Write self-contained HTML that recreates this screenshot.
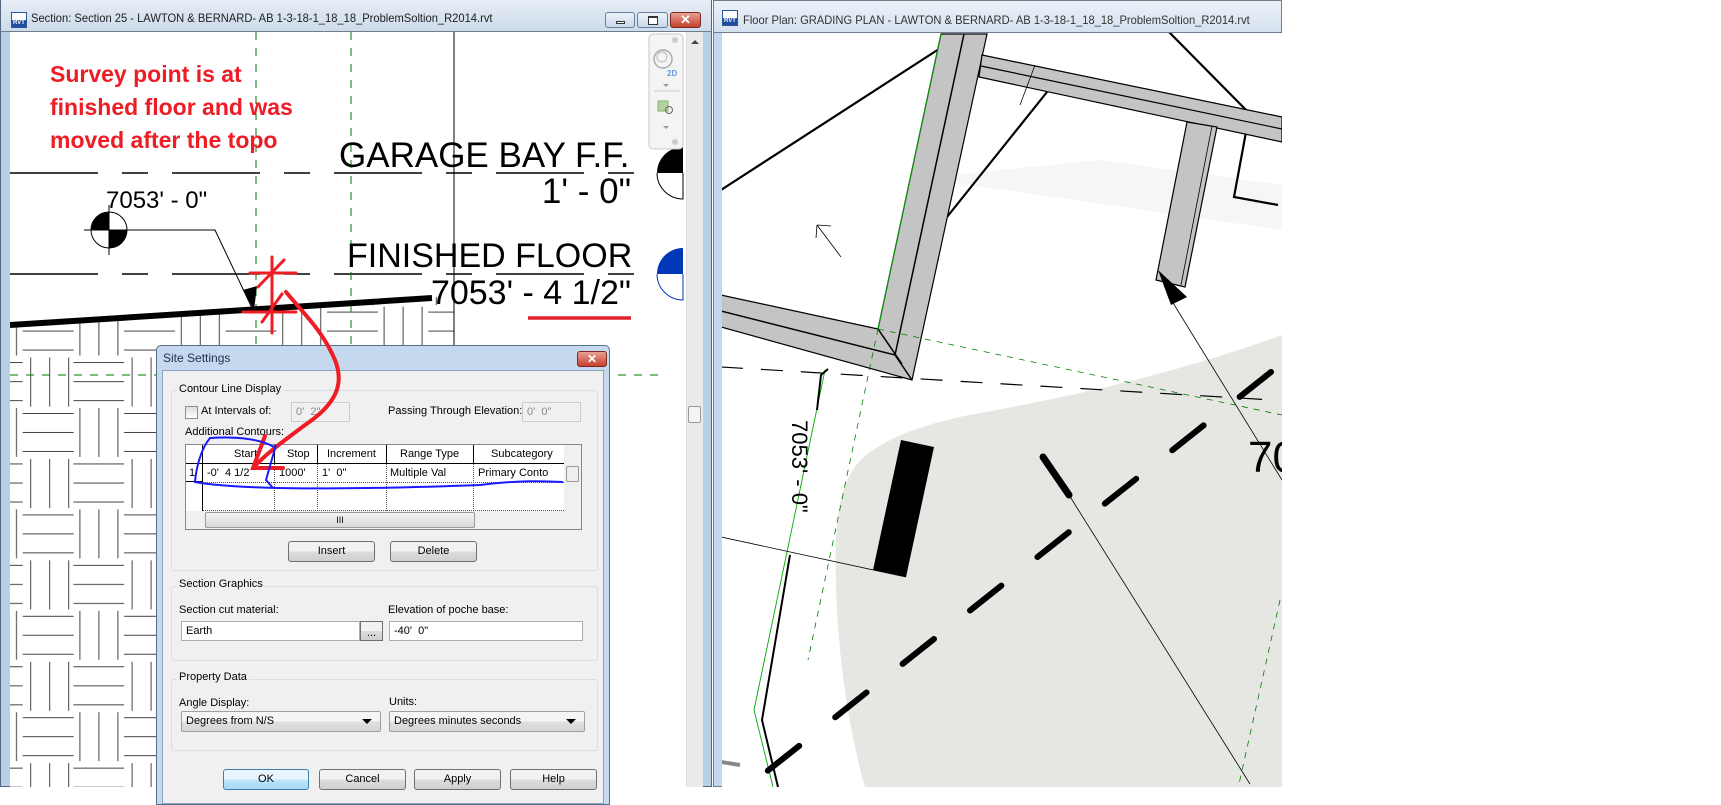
<!DOCTYPE html>
<html><head><meta charset="utf-8">
<style>
*{margin:0;padding:0;box-sizing:border-box}
body{width:1721px;height:787px;overflow:hidden;background:#fff;position:relative;font-family:"Liberation Sans",sans-serif}
.abs{position:absolute}
.tb{position:absolute;top:0;height:32px;background:linear-gradient(#e6edf6,#cddbeb);border-bottom:1px solid #6f7d8c}
.ttl{position:absolute;top:11px;font-size:12px;color:#1e1e1e;white-space:nowrap;transform-origin:0 0;transform:scaleX(0.93)}
.ico{position:absolute;top:12px;width:16px;height:16px;background:#fff;border:1px solid #2a56a0}
.ico:after{content:"RVT";position:absolute;left:0;bottom:0;width:14px;height:7px;background:#1f4f9c;color:#fff;font-size:6px;line-height:7px;text-align:center;font-weight:bold}
.wb{position:absolute;top:12px;height:16px;border:1px solid #6a7f99;border-radius:3px;background:linear-gradient(#eef3f9,#c9d7e8)}
.dlg{position:absolute;left:156px;top:345px;width:454px;height:460px;background:#c6d8ee;border:1px solid #566f8f;border-radius:5px 5px 0 0;font-size:11px;color:#000}
.dbody{position:absolute;left:5px;top:24px;right:5px;bottom:0;background:#f0f0f0;border:1px solid #8ea4be}
.grp{position:absolute;border:1px solid #d5dfe5;border-radius:3px}
.gl{position:absolute;background:#f0f0f0;padding:0 2px;font-size:11px;white-space:nowrap}
.lb{position:absolute;font-size:11px;white-space:nowrap}
.tx{position:absolute;height:20px;background:#fff;border:1px solid #abadb3;font-size:11px;padding:3px 4px;white-space:nowrap}
.btn{position:absolute;height:21px;border:1px solid #707070;border-radius:3px;background:linear-gradient(#f2f2f2 50%,#dddddd 50%,#cfcfcf);font-size:11px;text-align:center;line-height:19px}
.cb{position:absolute;height:21px;border:1px solid #a0a0a0;border-radius:2px;background:linear-gradient(#f5f5f5 50%,#e0e0e0 50%,#d5d5d5);font-size:11px;padding:3px 4px;white-space:nowrap}
.cb:after{content:"";position:absolute;right:8px;top:7px;border-left:5px solid transparent;border-right:5px solid transparent;border-top:5px solid #000}
</style></head><body>

<!-- LEFT WINDOW -->
<div class="abs" style="left:0;top:0;width:712px;height:787px;background:#b9cfe6;border:1px solid #52667e"></div>
<div class="tb" style="left:1px;width:710px"></div>
<div class="ico" style="left:11px"></div>
<div class="ttl" style="left:31px">Section: Section 25 - LAWTON &amp; BERNARD- AB 1-3-18-1_18_18_ProblemSoltion_R2014.rvt</div>
<div class="wb" style="left:605px;width:30px"><div class="abs" style="left:10px;top:8px;width:9px;height:3px;border:1px solid #333;background:#fff"></div></div>
<div class="wb" style="left:637px;width:31px"><div class="abs" style="left:10px;top:3px;width:10px;height:9px;border:1px solid #333;border-top-width:2px;background:#fff"></div></div>
<div class="wb" style="left:670px;width:31px;background:linear-gradient(#e8a093,#c4412c);border-color:#7a2a20"><div class="abs" style="left:0;top:-1px;width:29px;text-align:center;color:#fff;font-weight:bold;font-size:13px">✕</div></div>
<div class="abs" style="left:10px;top:32px;width:693px;height:755px;background:#fff"></div>
<div class="abs" style="left:686px;top:32px;width:17px;height:755px;background:#eaeaea;border-left:1px solid #ddd"></div>
<div class="abs" style="left:691px;top:40px;border-left:4px solid transparent;border-right:4px solid transparent;border-bottom:4px solid #444"></div>
<div class="abs" style="left:688px;top:406px;width:13px;height:17px;background:#f4f4f4;border:1px solid #999;border-radius:2px"></div>

<!-- RIGHT WINDOW -->
<div class="abs" style="left:713px;top:0;width:569px;height:787px;background:#c3d6ec;border:1px solid #6d7f93;overflow:hidden">
<div class="tb" style="left:0;width:569px;background:linear-gradient(#edf2f8,#d4e1ef)"></div>
<div class="ico" style="left:8px;top:9px"></div>
<div class="ttl" style="left:29px;top:12px;color:#333">Floor Plan: GRADING PLAN - LAWTON &amp; BERNARD- AB 1-3-18-1_18_18_ProblemSoltion_R2014.rvt</div>
</div>
<div class="abs" style="left:722px;top:33px;width:560px;height:754px;background:#fff"></div>

<svg class="abs" style="left:0;top:0" width="1721" height="787" viewBox="0 0 1721 787">
<defs>
<pattern id="hp" patternUnits="userSpaceOnUse" x="22.7" y="408" width="101.4" height="101.4">
<g stroke="#444" stroke-width="1" fill="none">
<path d="M0 5.5H51M0 24.5H51M0 43.5H51"/>
<path d="M57.2 0V49M76.2 0V49M95.2 0V49"/>
<path d="M8 51V100M27 51V100M46 51V100"/>
<path d="M50.7 56H101.4M50.7 75H101.4M50.7 94H101.4"/>
</g></pattern>
<clipPath id="lc"><rect x="10" y="32" width="676" height="755"/></clipPath>
<clipPath id="rc"><rect x="722" y="33" width="560" height="754"/></clipPath>
</defs>
<g clip-path="url(#lc)">
<polygon points="10,325 454,296 454,787 10,787" fill="url(#hp)"/>
<g stroke="#000" stroke-width="1.5" stroke-dasharray="88,24,26,24" fill="none">
<path d="M10 173H650"/><path d="M10 274H650"/>
</g>
<path d="M454 32V345" stroke="#000" stroke-width="1"/>
<g stroke="#007a00" stroke-width="1" stroke-dasharray="8,8"><path d="M256 32V787"/><path d="M351 32V787"/><path d="M10 375H660"/></g>
<path d="M10 325L432 298" stroke="#000" stroke-width="6"/>
<circle cx="109" cy="230" r="18" fill="#fff" stroke="#000"/>
<path d="M109 230V212A18 18 0 0 0 91 230Z M109 230V248A18 18 0 0 0 127 230Z" fill="#000"/>
<path d="M84 230H215L252 308M109 205V255" stroke="#000" stroke-width="1" fill="none"/>
<path d="M254 310L243 290L257 286Z" fill="#000"/>
<text x="106" y="208" font-size="24">7053' - 0"</text>
<text x="339" y="167" font-size="35">GARAGE BAY F.F.</text>
<text x="631" y="203" font-size="35" text-anchor="end">1' - 0"</text>
<text x="347" y="267" font-size="34">FINISHED FLOOR</text>
<text x="631" y="304" font-size="34" text-anchor="end">7053' - 4 1/2"</text>
<path d="M528 318H631" stroke="#e3202a" stroke-width="3.5"/>
<path d="M683 173V147A26 26 0 0 0 657 173Z" fill="#000"/>
<path d="M683 173V199A26 26 0 0 1 657 173" fill="#fff" stroke="#000"/>
<path d="M683 274V248A26 26 0 0 0 657 274Z" fill="#0038b8"/>
<path d="M683 274V300A26 26 0 0 1 657 274" fill="#fff" stroke="#0038b8"/>
<text x="50" y="82" font-size="23" font-weight="bold" fill="#ee1c25">Survey point is at</text>
<text x="50" y="115" font-size="23" font-weight="bold" fill="#ee1c25">finished floor and was</text>
<text x="50" y="148" font-size="23" font-weight="bold" fill="#ee1c25">moved after the topo</text>
<rect x="649" y="34" width="34" height="115" rx="4" fill="#f4f4f4" stroke="#c8c8c8"/>
<circle cx="675" cy="40" r="3" fill="#ccc"/><circle cx="675" cy="142" r="3" fill="#ccc"/>
<circle cx="663" cy="59" r="9" fill="none" stroke="#aaa" stroke-width="1.5"/><circle cx="662" cy="57" r="5" fill="none" stroke="#bbb"/>
<text x="667" y="76" font-size="8" fill="#6b9bd2" font-weight="bold">2D</text>
<path d="M663 84l3 3 3-3z" fill="#999"/><path d="M654 91H680" stroke="#ccc"/>
<rect x="658" y="101" width="10" height="10" fill="#b3d39c" stroke="#8ab070"/><circle cx="669" cy="110" r="3.5" fill="none" stroke="#666"/>
<path d="M663 126l3 3 3-3z" fill="#999"/>
</g>

<g clip-path="url(#rc)">
<path d="M1282 335C1200 365 1100 392 969 415C920 425 890 438 870 452C845 470 838 500 836 540C834 600 840 700 865 787L1282 787Z" fill="#e6e6e3"/>
<path d="M1282 185L1100 160L920 178L1282 230Z" fill="#f6f6f6"/>
<g stroke="#000" stroke-width="2.2" fill="none">
<path d="M721 190L939 49"/><path d="M947 217L1047 92"/><path d="M1169 32L1250 114"/>
<path d="M1246 132L1234 197L1278 205"/>
</g>
<polygon points="941,34 987,34 912,380 721,327 721,295 878,329" fill="#c4c4c4" stroke="#000" stroke-width="1.2"/>
<path d="M964 34L895 355L721 311M895 355L912 380M878 329L902 364" stroke="#000" stroke-width="1.5" fill="none"/>
<polygon points="982,55 1282,117 1282,142 979,77" fill="#c4c4c4" stroke="#000" stroke-width="1.2"/>
<path d="M981 66L1282 129" stroke="#000" stroke-width="1.2"/>
<path d="M1035 65L1020 105" stroke="#000" stroke-width="0.8"/>
<polygon points="1187,122 1217,127 1185,287 1156,280" fill="#c4c4c4" stroke="#000" stroke-width="1.2"/>
<path d="M1212 126L1181 285" stroke="#000" stroke-width="0.8"/>
<path d="M1158 270L1171 305L1187 297Z" fill="#000"/>
<path d="M1170 298L1282 480" stroke="#000" stroke-width="0.8"/>
<path d="M817 225L841 257M817 225L831 226M817 225L816 238" stroke="#000" stroke-width="0.8" fill="none"/>
<path d="M721 367L1272 400" stroke="#000" stroke-width="1.2" stroke-dasharray="22,18"/>
<path d="M878 329L1282 415M878 329L808 660M1280 600L1239 784" stroke="#007a00" stroke-width="0.8" stroke-dasharray="6,6" fill="none"/>
<path d="M941 34L878 329M825 370L754 710L773 787" stroke="#0a0" stroke-width="0.9" fill="none"/>
<path d="M828 369L821 375L817 410M790 555L762 720L778 787" stroke="#000" stroke-width="2" fill="none"/>
<path d="M721 537L906 577" stroke="#000" stroke-width="0.8"/>
<polygon points="901,440 934,447 906,577 873,570" fill="#000"/>
<path d="M1271 372L751 784" stroke="#000" stroke-width="6" stroke-linecap="round" stroke-dasharray="40,46"/>
<path d="M1043 457L1069 495" stroke="#000" stroke-width="7" stroke-linecap="round"/>
<path d="M1069 495L1250 784" stroke="#000" stroke-width="0.8"/>
<path d="M721 762L740 765" stroke="#888" stroke-width="4"/>
<text x="1248" y="472" font-size="44">70</text>
<text x="0" y="0" font-size="22" transform="translate(792 420) rotate(90)">7053' - 0"</text>
</g>
</svg>

<div class="dlg">
<div class="lb" style="left:6px;top:5px;font-size:12px;color:#1e3050">Site Settings</div>
<div class="abs" style="left:420px;top:5px;width:30px;height:16px;border:1px solid #7a2a20;border-radius:3px;background:linear-gradient(#e8a093,#c4412c);color:#fff;text-align:center;font-weight:bold;font-size:12px;line-height:14px">✕</div>
<div class="dbody"></div>
<div class="grp" style="left:14px;top:44px;width:427px;height:181px"></div>
<div class="gl" style="left:20px;top:37px">Contour Line Display</div>
<div class="abs" style="left:28px;top:60px;width:13px;height:13px;border:1px solid #8f8f8f;background:linear-gradient(#ddd,#fff)"></div>
<div class="lb" style="left:44px;top:59px">At Intervals of:</div>
<div class="tx" style="left:134px;top:56px;width:59px;background:#f0f0f0;color:#888;border-color:#ccc">0'&nbsp; 2"</div>
<div class="lb" style="left:231px;top:59px">Passing Through Elevation:</div>
<div class="tx" style="left:365px;top:56px;width:59px;background:#f0f0f0;color:#888;border-color:#ccc">0'&nbsp; 0"</div>
<div class="lb" style="left:28px;top:80px">Additional Contours:</div>
<div class="abs" style="left:28px;top:98px;width:397px;height:86px;border:1px solid #828790;background:#f0f0f0"></div>
<div class="abs" style="left:29px;top:99px;width:378px;height:66px;background:#fff"></div>
<div class="abs" style="left:29px;top:99px;width:378px;height:19px;background:#fff;border-bottom:1px solid #000"></div>
<div class="abs" style="left:29px;top:99px;width:17px;height:66px;border-right:1px solid #000"></div>
<div class="abs" style="left:29px;top:118px;width:17px;height:18px;border-bottom:1px solid #000"></div>
<div class="abs" style="left:117px;top:99px;height:19px;border-left:1px solid #000"></div>
<div class="abs" style="left:160px;top:99px;height:19px;border-left:1px solid #000"></div>
<div class="abs" style="left:229px;top:99px;height:19px;border-left:1px solid #000"></div>
<div class="abs" style="left:316px;top:99px;height:19px;border-left:1px solid #000"></div>
<div class="abs" style="left:117px;top:118px;height:47px;border-left:1px dotted #555"></div>
<div class="abs" style="left:160px;top:118px;height:47px;border-left:1px dotted #555"></div>
<div class="abs" style="left:229px;top:118px;height:47px;border-left:1px dotted #555"></div>
<div class="abs" style="left:316px;top:118px;height:47px;border-left:1px dotted #555"></div>
<div class="abs" style="left:46px;top:136px;width:361px;border-top:1px dotted #555"></div>
<div class="abs" style="left:46px;top:164px;width:361px;border-top:1px dotted #555"></div>
<div class="lb" style="left:77px;top:102px">Start</div>
<div class="lb" style="left:130px;top:102px">Stop</div>
<div class="lb" style="left:170px;top:102px">Increment</div>
<div class="lb" style="left:243px;top:102px">Range Type</div>
<div class="lb" style="left:334px;top:102px">Subcategory</div>
<div class="lb" style="left:32px;top:121px">1</div>
<div class="lb" style="left:50px;top:121px">-0'&nbsp; 4 1/2</div>
<div class="lb" style="left:122px;top:121px">1000'</div>
<div class="lb" style="left:165px;top:121px">1'&nbsp; 0"</div>
<div class="lb" style="left:233px;top:121px">Multiple Val</div>
<div class="lb" style="left:321px;top:121px">Primary Conto</div>
<div class="abs" style="left:407px;top:99px;width:17px;height:66px;background:#f0f0f0"></div>
<div class="abs" style="left:409px;top:120px;width:13px;height:16px;border:1px solid #999;background:#eee;border-radius:2px"></div>
<div class="abs" style="left:48px;top:166px;width:270px;height:16px;border:1px solid #999;background:linear-gradient(#f4f4f4,#d8d8d8);border-radius:2px;text-align:center;font-size:9px;line-height:14px">III</div>
<div class="btn" style="left:131px;top:195px;width:87px">Insert</div>
<div class="btn" style="left:233px;top:195px;width:87px">Delete</div>
<div class="grp" style="left:14px;top:240px;width:427px;height:75px"></div>
<div class="gl" style="left:20px;top:232px">Section Graphics</div>
<div class="lb" style="left:22px;top:258px">Section cut material:</div>
<div class="tx" style="left:24px;top:275px;width:179px">Earth</div>
<div class="btn" style="left:203px;top:275px;width:23px;height:20px;border-radius:0;line-height:22px">...</div>
<div class="lb" style="left:231px;top:258px">Elevation of poche base:</div>
<div class="tx" style="left:232px;top:275px;width:194px">-40'&nbsp; 0"</div>
<div class="grp" style="left:14px;top:333px;width:427px;height:72px"></div>
<div class="gl" style="left:20px;top:325px">Property Data</div>
<div class="lb" style="left:22px;top:351px">Angle Display:</div>
<div class="cb" style="left:24px;top:365px;width:200px">Degrees from N/S</div>
<div class="lb" style="left:232px;top:350px">Units:</div>
<div class="cb" style="left:232px;top:365px;width:196px">Degrees minutes seconds</div>
<div class="btn" style="left:66px;top:423px;width:86px;border-color:#3c7fb1;background:linear-gradient(#eaf6fd 50%,#bee6fd 50%,#a7d9f5)">OK</div>
<div class="btn" style="left:162px;top:423px;width:87px">Cancel</div>
<div class="btn" style="left:257px;top:423px;width:87px">Apply</div>
<div class="btn" style="left:353px;top:423px;width:87px">Help</div>
</div>

<svg class="abs" style="left:0;top:0" width="1721" height="787" viewBox="0 0 1721 787">
<g stroke="#ee1c25" stroke-width="3" fill="none" stroke-linecap="round">
<path d="M272 257V333M250 273H296M243 312H296M258 287L284 260M262 322L282 294"/>
</g>
<path d="M286 292C305 315 322 330 335 360C345 385 335 405 305 425C285 440 268 452 254 467" stroke="#ee1c25" stroke-width="4" fill="none" stroke-linecap="round"/>
<path d="M265 436L253 468L283 468" stroke="#ee1c25" stroke-width="4" fill="none" stroke-linecap="round"/>
<path d="M274 447C262 440 240 436 210 438C200 450 196 470 195 482C250 492 400 488 480 485C520 480 545 481 563 482" stroke="#1a1aff" stroke-width="2" fill="none"/>
<path d="M276 445L266 480L273 488" stroke="#1a1aff" stroke-width="2" fill="none"/>
</svg>
</body></html>
